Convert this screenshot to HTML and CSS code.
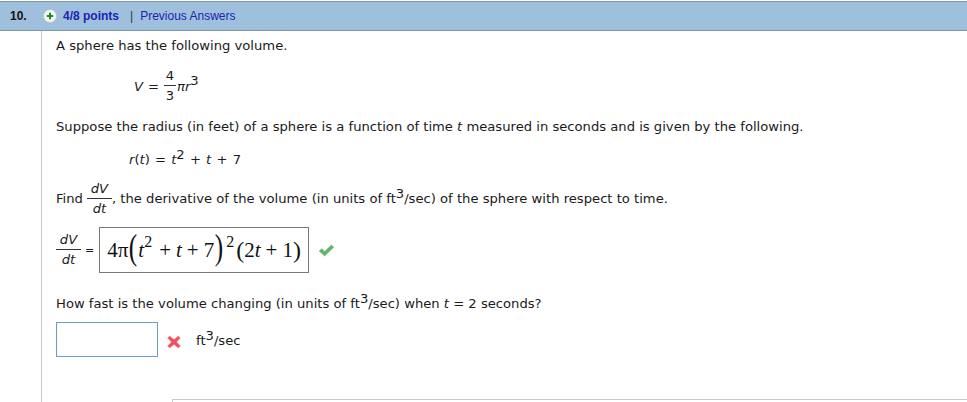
FILE: index.html
```html
<!DOCTYPE html>
<html lang="en">
<head>
<meta charset="utf-8">
<title>Question 10</title>
<link rel="stylesheet" href="styles.css">
</head>
<body>
<header class="bar">
  <span class="num">10.</span>
  <svg class="plus" width="14" height="14" viewBox="0 0 14 14" aria-hidden="true">
    <circle cx="7" cy="7" r="6.5" fill="#f4f6f4" stroke="#b9c6d2"/>
    <path d="M7 3.8v6.4M3.8 7h6.4" stroke="#1c8a2c" stroke-width="2"/>
  </svg>
  <span class="points">4/8 points</span>
  <span class="sep">|</span>
  <span class="prev">Previous Answers</span>
</header>
<main class="content">
  <p class="line first">A sphere has the following volume.</p>
  <div class="formula vol">
    <i>V</i><span class="eq">=</span>
    <span class="frac fixed"><span class="top">4</span><span class="bot">3</span></span>
    <span class="tail"><i>πr</i><sup>3</sup></span>
  </div>
  <p class="line suppose">Suppose the radius (in feet) of a sphere is a function of time <i>t</i> measured in seconds and is given by the following.</p>
  <div class="formula rad"><span class="spaced"><i>r</i>(<i>t</i>) = <i>t</i><sup>2</sup> + <i>t</i> + 7</span></div>
  <div class="line find">
    <span>Find</span>
    <span class="frac wide"><span class="top"><i>dV</i></span><span class="bot"><i>dt</i></span></span>
    <span class="after">, the derivative of the volume (in units of ft<sup>3</sup>/sec) of the sphere with respect to time.</span>
  </div>
  <div class="answer">
    <span class="frac wide"><span class="top"><i>dV</i></span><span class="bot"><i>dt</i></span></span>
    <span class="eq small">=</span>
    <div class="box">4π<span class="paren">(</span><i>t</i><sup>2</sup><span class="op">+</span><i>t</i><span class="op">+</span>7<span class="paren">)</span><sup class="sq">2</sup><span class="mid">(</span>2<i>t</i><span class="op">+</span>1<span class="mid">)</span></div>
    <svg class="check" width="17" height="13" viewBox="0 0 16 13" preserveAspectRatio="none" aria-hidden="true">
      <path d="M1 7l2.6-2.4L6.2 7.4 12.6 1 15 3.2 6.2 12z" fill="#5fb565" stroke="#8fbf92" stroke-width=".6"/>
    </svg>
  </div>
  <p class="line fast">How fast is the volume changing (in units of ft<sup>3</sup>/sec) when <i>t</i> = 2 seconds?</p>
  <div class="entry">
    <input class="field" type="text" aria-label="answer">
    <svg class="cross" width="14" height="14" viewBox="0 0 14 14" aria-hidden="true">
      <path d="M2.6 1L7 4.6 11.4 1 13.4 3 9.6 7l3.8 4-2 2L7 9.4 2.6 13 .6 11l3.8-4L.6 3z" fill="#f0505c" stroke="#f28a90" stroke-width=".5"/>
    </svg>
    <span class="unit">ft<sup>3</sup>/sec</span>
  </div>
  <div class="next"></div>
</main>
</body>
</html>
```

FILE: styles.css
```css
html, body {
  margin: 0;
  padding: 0;
  height: 402px;
  overflow: hidden;
  background: #fff;
}
body {
  font-family: "DejaVu Sans", Verdana, sans-serif;
  font-size: 13.15px;
  color: #1a1a1a;
}
.bar {
  display: flex;
  align-items: center;
  box-sizing: border-box;
  height: 30px;
  margin-top: 1px;
  padding-left: 10px;
  background: #9fc0dc;
  border-top: 1px solid #7f95a8;
  border-bottom: 1px solid #7f95a8;
  font-family: "Liberation Sans", Arial, sans-serif;
  font-size: 12px;
}
.num { width: 33px; font-weight: bold; color: #111; }
.plus { margin-right: 6px; }
.points { font-weight: bold; color: #1c22b4; }
.sep { margin-left: 11px; margin-right: 7px; color: #333; }
.prev { color: #1c22b4; }
.content {
  box-sizing: border-box;
  height: 371px;
  margin-left: 41px;
  padding-left: 14px;
  border-left: 1px solid #c8c8c8;
}
.line { margin: 0; line-height: 16px; }
sup { font-size: 100%; line-height: 0; vertical-align: baseline; position: relative; top: -5px; }
.first { padding-top: 7px; }
.formula { display: flex; align-items: center; }
.vol { margin: 14px 0 0 78px; height: 36px; }
.eq { margin: 0 5px 0 5px; }
.frac { display: inline-flex; flex-direction: column; text-align: center; }
.frac.fixed { width: 12px; }
.frac .top { line-height: 18px; border-bottom: 1px solid #333; }
.frac .bot { line-height: 20px; }
.tail { margin: 0 0 0 1px; }
.tail sup { top: -6px; }
.suppose { margin-top: 15px; }
.rad { margin: 17px 0 0 73px; line-height: 16px; }
.spaced { word-spacing: 1px; }
.find { display: flex; align-items: center; margin-top: 14px; height: 34px; }
.frac.wide { width: 25px; margin-left: 4px; }
.answer { display: flex; align-items: center; margin-top: 11px; height: 46px; }
.answer .frac.wide { margin-left: 0; }
.eq.small { margin: 0 5px 0 4px; font-size: 11px; }
.box {
  box-sizing: border-box;
  display: flex;
  align-items: center;
  width: 210px;
  height: 46px;
  padding-left: 7px;
  border: 1px solid #7a7a7a;
  font-family: "Liberation Serif", "Times New Roman", serif;
  font-size: 21px;
  color: #111;
  white-space: nowrap;
}
.box sup { font-size: 16px; top: -8px; margin-right: 2px; }
.box .sq { margin-left: 2px; margin-right: 2px; }
.paren { display: inline-block; font-size: 36px; position: relative; top: -3px; transform: scaleX(.7); margin: 0 -1px; }
.mid { font-size: 24px; }
.op { margin: 0 5px; }
.check { margin-left: 9px; }
.fast { margin-top: 23px; }
.entry { display: flex; align-items: center; margin-top: 10px; }
.field {
  box-sizing: border-box;
  width: 102px;
  height: 35px;
  margin: 0;
  padding: 0;
  border: 1px solid #6f9ccb;
  background: #fff;
  box-shadow: inset 0 0 1px #a9c8e6;
}
.cross { margin: 5px 0 0 9px; }
.unit { margin-left: 15px; margin-top: 1px; }
.next {
  height: 10px;
  margin: 42px 0 0 116px;
  border-top: 1px solid #c8c8c8;
  border-left: 1px solid #c8c8c8;
}
```
